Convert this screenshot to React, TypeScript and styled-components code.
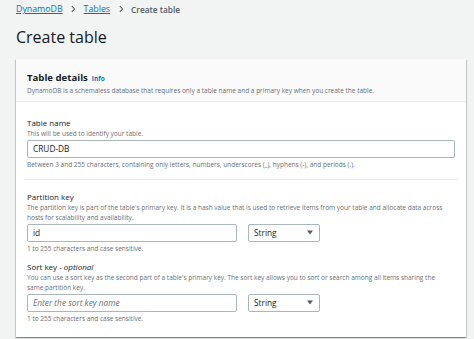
import React from "react";
import styled, { createGlobalStyle } from "styled-components";

const Global = createGlobalStyle`
  html, body { margin: 0; padding: 0; background: #f2f3f3; }
  body { font-family: "Open Sans", "Liberation Sans", Arial, sans-serif; color: #16191f; }
  * { box-sizing: border-box; }
`;

const Page = styled.div`
  padding: 0 8px 0 16px;
  width: 474px;
  height: 339px;
  overflow: hidden;
`;

const Breadcrumbs = styled.nav`
  display: flex;
  align-items: center;
  gap: 3.5px;
  height: 18px;
  font-size: 8.8px;
`;

const Crumb = styled.a`
  color: #0073bb;
  text-decoration: underline;
  text-underline-offset: 1px;
`;

const Current = styled.span`
  color: #545b64;
  font-weight: 600;
  font-size: 8.3px;
`;

const Chevron = styled.svg`
  width: 8px;
  height: 8px;
  margin: 0 3px;
`;

const Title = styled.h1`
  margin: 5px 0 8px;
  font-size: 16px;
  line-height: 28px;
  font-weight: 400;
  color: #16191f;
`;

const Panel = styled.section`
  background: #fff;
  box-shadow: 0 1px 1px rgba(0, 28, 36, 0.3), 1px 1px 1px rgba(0, 28, 36, 0.15),
    -1px 1px 1px rgba(0, 28, 36, 0.15);
`;

const PanelHeader = styled.header`
  background: #fafafa;
  border-bottom: 1px solid #eaeded;
  padding: 12px 11px 5px;
`;

const PanelTitle = styled.h2`
  margin: 0;
  font-size: 9.6px;
  line-height: 13px;
  font-weight: 700;
  display: flex;
  align-items: baseline;
  gap: 4px;
`;

const Info = styled.span`
  color: #0073bb;
  font-size: 6.5px;
  font-weight: 700;
`;

const HeaderDesc = styled.p`
  margin: 0;
  font-size: 6.5px;
  line-height: 11px;
  color: #687078;
`;

const PanelBody = styled.div`
  padding: 13.5px 11px 13px;
`;

const Field = styled.div<{ $gapTop?: number }>`
  margin-top: ${(p) => p.$gapTop ?? 0}px;
`;

const Label = styled.div`
  font-size: 8px;
  line-height: 13px;
  color: #16191f;
`;

const Desc = styled.div`
  max-width: 423px;
  font-size: 6.5px;
  line-height: 9.5px;
  color: #687078;
  margin-bottom: 1.5px;
`;

const Hint = styled.div`
  font-size: 6.5px;
  line-height: 10px;
  color: #687078;
  margin-top: 2px;
`;

const Row = styled.div`
  display: flex;
  gap: 11px;
`;

const Input = styled.div<{ $width?: number; $placeholder?: boolean }>`
  ${(p) => (p.$width ? `width: ${p.$width}px;` : "flex: 1;")}
  height: 18px;
  border: 1px solid #aab7b8;
  border-radius: 2px;
  background: #fff;
  display: flex;
  align-items: center;
  padding: 0 5px;
  font-size: 8.3px;
  color: ${(p) => (p.$placeholder ? "#687078" : "#16191f")};
  font-style: ${(p) => (p.$placeholder ? "italic" : "normal")};
`;

const Select = styled.div`
  width: 72px;
  height: 18px;
  border: 1px solid #aab7b8;
  border-radius: 2px;
  display: flex;
  align-items: center;
  justify-content: space-between;
  padding: 0 6px 0 5px;
  font-size: 8.3px;
  color: #16191f;
`;

const Caret = styled.svg`
  width: 6px;
  height: 5px;
`;

const Divider = styled.hr`
  border: 0;
  border-top: 1px solid #eaeded;
  margin: 9.5px -3px 10px;
`;

const Optional = styled.i`
  font-style: italic;
`;

const Arrow = () => (
  <Chevron viewBox="0 0 10 10">
    <path d="M3.5 1.5 L7 5 L3.5 8.5" fill="none" stroke="#545b64" strokeWidth="1.3" />
  </Chevron>
);

const Down = () => (
  <Caret viewBox="0 0 6 5">
    <path d="M0 0.5 H6 L3 4.5 Z" fill="#545b64" />
  </Caret>
);

export default function App() {
  return (
    <>
      <Global />
      <Page>
        <Breadcrumbs>
          <Crumb>DynamoDB</Crumb>
          <Arrow />
          <Crumb>Tables</Crumb>
          <Arrow />
          <Current>Create table</Current>
        </Breadcrumbs>
        <Title>Create table</Title>
        <Panel>
          <PanelHeader>
            <PanelTitle>
              Table details <Info>Info</Info>
            </PanelTitle>
            <HeaderDesc>
              DynamoDB is a schemaless database that requires only a table name and a primary key when you create the table.
            </HeaderDesc>
          </PanelHeader>
          <PanelBody>
            <Field>
              <Label>Table name</Label>
              <Desc>This will be used to identify your table.</Desc>
              <Input>CRUD-DB</Input>
              <Hint>
                Between 3 and 255 characters, containing only letters, numbers, underscores (_), hyphens (-), and periods (.).
              </Hint>
            </Field>
            <Divider />
            <Field>
              <Label>Partition key</Label>
              <Desc>
                The partition key is part of the table's primary key. It is a hash value that is used to retrieve items from your table and allocate data across hosts for scalability and availability.
              </Desc>
              <Row>
                <Input $width={210}>id</Input>
                <Select>
                  String <Down />
                </Select>
              </Row>
              <Hint>1 to 255 characters and case sensitive.</Hint>
            </Field>
            <Field $gapTop={6.5}>
              <Label>
                Sort key - <Optional>optional</Optional>
              </Label>
              <Desc>
                You can use a sort key as the second part of a table's primary key. The sort key allows you to sort or search among all items sharing the same partition key.
              </Desc>
              <Row>
                <Input $width={210} $placeholder>
                  Enter the sort key name
                </Input>
                <Select>
                  String <Down />
                </Select>
              </Row>
              <Hint>1 to 255 characters and case sensitive.</Hint>
            </Field>
          </PanelBody>
        </Panel>
      </Page>
    </>
  );
}
